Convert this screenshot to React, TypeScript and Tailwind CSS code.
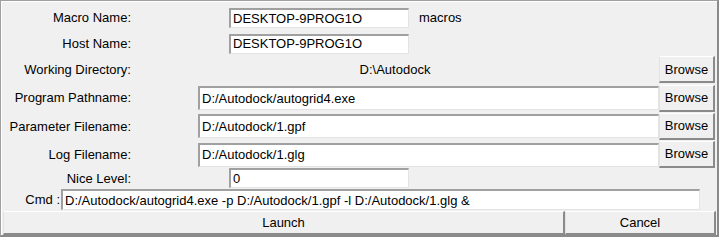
function Entry({ value, className }: { value: string; className: string }) {
  return (
    <div
      className={`flex items-center overflow-hidden whitespace-nowrap border-t-2 border-l-2 border-r border-b border-t-[#a0a0a0] border-l-[#a0a0a0] border-r-[#e3e3e3] border-b-[#e3e3e3] bg-white pl-[2px] ${className}`}
    >
      {value}
    </div>
  );
}

function RaisedButton({ label, className }: { label: string; className: string }) {
  return (
    <div
      className={`flex items-center justify-center border-t border-l border-r-2 border-b-2 border-t-white border-l-[#e3e3e3] border-r-[#8a8a8a] border-b-[#8a8a8a] bg-[#f0f0f0] ${className}`}
    >
      {label}
    </div>
  );
}

function Label({ text }: { text: string }) {
  return <div className="w-[128px] shrink-0 text-right">{text}</div>;
}

export default function App() {
  return (
    <div className="h-[244px] w-[720px] bg-white font-['Liberation_Sans',Arial,sans-serif] text-[13px] text-black">
      <div className="h-[237px] w-[719px] border-t border-l border-r-2 border-b-2 border-t-[#a0a0a0] border-l-[#a0a0a0] border-r-[#8a8a8a] border-b-[#8a8a8a]">
        <div className="flex h-full flex-col border-t border-l border-white bg-[#f0f0f0] pl-px pt-[2px]">
          {/* macro name */}
          <div className="flex h-[28px] items-center">
            <Label text="Macro Name:" />
            <Entry value="DESKTOP-9PROG1O" className="ml-[98px] h-[20px] w-[180px]" />
            <span className="ml-[10px]">macros</span>
          </div>
          <div className="flex h-[24px] items-center">
            <Label text="Host Name:" />
            <Entry value="DESKTOP-9PROG1O" className="ml-[98px] h-[20px] w-[180px]" />
          </div>
          <div className="flex h-[29px] items-center">
            <Label text="Working Directory:" />
            <div className="w-[528px] text-center">D:\Autodock</div>
            <RaisedButton label="Browse" className="h-[27px] w-[56px]" />
          </div>
          <div className="flex h-[28px] items-center">
            <Label text="Program Pathname:" />
            <Entry value="D:/Autodock/autogrid4.exe" className="ml-[67px] h-[24px] w-[461px]" />
            <RaisedButton label="Browse" className="h-[27px] w-[56px]" />
          </div>
          <div className="flex h-[29px] items-center">
            <Label text="Parameter Filename:" />
            <Entry value="D:/Autodock/1.gpf" className="ml-[67px] h-[24px] w-[461px]" />
            <RaisedButton label="Browse" className="h-[27px] w-[56px]" />
          </div>
          <div className="flex h-[28px] items-center">
            <Label text="Log Filename:" />
            <Entry value="D:/Autodock/1.glg" className="ml-[67px] h-[24px] w-[461px]" />
            <RaisedButton label="Browse" className="h-[27px] w-[56px]" />
          </div>
          <div className="flex h-[20px] items-center">
            <Label text="Nice Level:" />
            <Entry value="0" className="ml-[98px] h-[20px] w-[180px]" />
          </div>
          <div className="flex h-[23px] items-center">
            <div className="w-[57px] shrink-0 text-right">Cmd :</div>
            <Entry
              value="D:/Autodock/autogrid4.exe -p D:/Autodock/1.gpf -l D:/Autodock/1.glg &"
              className="ml-px h-[21px] w-[639px]"
            />
          </div>
          <div className="flex h-[24px]">
            <RaisedButton label="Launch" className="h-full w-[562px]" />
            <RaisedButton label="Cancel" className="h-full w-[151px]" />
          </div>
        </div>
      </div>
    </div>
  );
}
